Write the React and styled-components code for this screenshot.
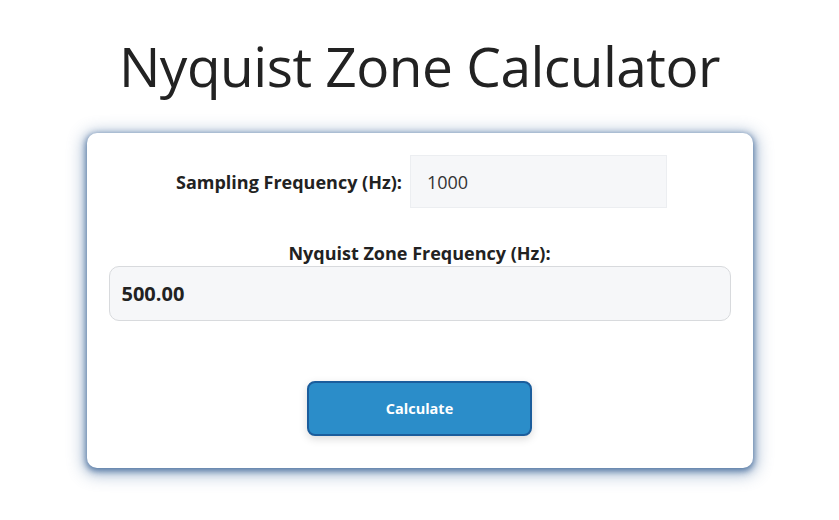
import React from "react";
import styled, { createGlobalStyle } from "styled-components";

const GlobalStyle = createGlobalStyle`
  html, body {
    margin: 0;
    padding: 0;
    background: #ffffff;
  }
  body {
    font-family: "Open Sans", "Noto Sans", sans-serif;
    color: #222;
  }
`;

const Page = styled.div`
  width: 839px;
  min-height: 520px;
  box-sizing: border-box;
  padding-bottom: 40px;
  display: flex;
  flex-direction: column;
  align-items: center;
`;

const Title = styled.h1`
  margin: 26px 0 0;
  font-size: 55px;
  font-weight: 400;
  line-height: 80px;
  color: #222;
  letter-spacing: -0.5px;
`;

const Card = styled.div`
  box-sizing: border-box;
  width: 666px;
  margin-top: 27px;
  padding: 22px 22px 32px;
  background: #fff;
  border-radius: 10px;
  box-shadow: 0 2px 6px 1px rgba(60, 100, 150, 0.8),
    0 3px 16px 4px rgba(70, 110, 160, 0.45);
  display: flex;
  flex-direction: column;
  align-items: center;
`;

const Row = styled.div`
  display: flex;
  align-items: center;
  gap: 8px;
  margin-left: 4px;
`;

const Label = styled.label`
  font-size: 18px;
  line-height: 22px;
  font-weight: 700;
  color: #222;
  margin-top: ${p => p.top || 0}px;
`;

const Input = styled.div`
  box-sizing: border-box;
  width: 257px;
  height: 53px;
  padding: 0 16px;
  display: flex;
  align-items: center;
  background: #f6f7f9;
  border: 1px solid #eceef1;
  font-size: 18px;
  color: #333;
`;

const Output = styled.div`
  box-sizing: border-box;
  width: 100%;
  height: 55px;
  margin-top: 2px;
  padding: 0 12px;
  display: flex;
  align-items: center;
  background: #f6f7f9;
  border: 1px solid #d8dadd;
  border-radius: 10px;
  font-size: 20px;
  font-weight: 700;
  color: #222;
`;

const Button = styled.button`
  box-sizing: border-box;
  width: 225px;
  height: 55px;
  margin-top: 60px;
  background: #2b8dc9;
  border: 2px solid #1b5d9c;
  border-radius: 8px;
  color: #fff;
  font-family: inherit;
  font-size: 14.5px;
  font-weight: 700;
  box-shadow: 0 3px 8px rgba(0, 0, 0, 0.15);
  cursor: pointer;
`;

const App = () => (
  <Page>
    <GlobalStyle />
    <Title>Nyquist Zone Calculator</Title>
    <Card>
      <Row>
        <Label>Sampling Frequency (Hz):</Label>
        <Input>1000</Input>
      </Row>
      <Label top={34}>Nyquist Zone Frequency (Hz):</Label>
      <Output>500.00</Output>
      <Button>Calculate</Button>
    </Card>
  </Page>
);

export default App;
